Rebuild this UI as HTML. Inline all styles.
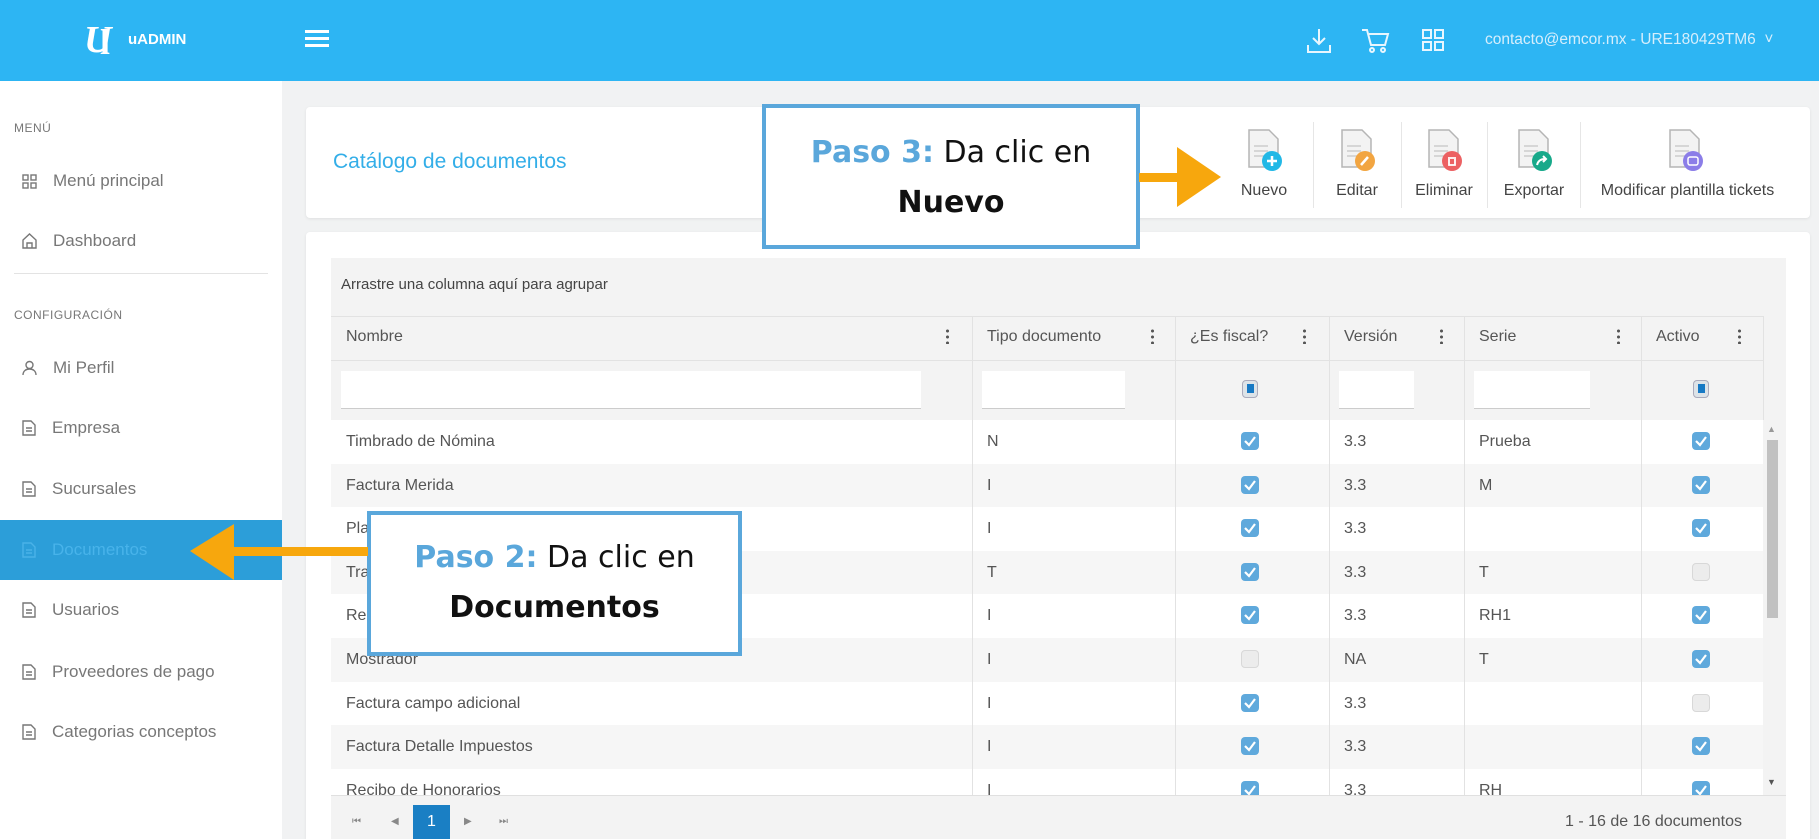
<!DOCTYPE html>
<html style="overflow:hidden;width:1819px;height:839px"><head><meta charset="utf-8">
<style>
*{margin:0;padding:0;box-sizing:border-box}
body{width:1819px;height:839px;overflow:hidden;background:#f1f2f3;font-family:"Liberation Sans",sans-serif;position:relative;color:#555}
.a{position:absolute}
.hdr{left:0;top:0;width:1819px;height:81px;background:#2db5f3}
.side{left:0;top:81px;width:282px;height:758px;background:#fff}
.si{position:absolute;left:22px;font-size:17px;color:#777;display:flex;align-items:center}
.si svg{margin-right:16px}
.sec{position:absolute;left:14px;font-size:12px;color:#777;letter-spacing:.5px}
.card{background:#fff;border-radius:4px;box-shadow:0 1px 3px rgba(0,0,0,.08)}
.tb{position:absolute;top:110px;height:100px;text-align:center;font-size:16px;color:#444}
.tb .lb{position:absolute;top:72px;left:0;right:0;white-space:nowrap}
.sep{position:absolute;top:122px;width:1px;height:86px;background:#e6e6e6}
.cell{position:absolute;font-size:16px;color:#555;white-space:nowrap}
.vl{position:absolute;width:1px;background:#e2e2e2}
.cb{position:absolute;width:18px;height:18px;border-radius:4px;background:#5fa9dc}
.cb svg{display:block}
.cbo{background:#ececec;border:1px solid #d8d8d8}
.dots{position:absolute;width:3px;height:16px;background:radial-gradient(circle,#555 1.4px,transparent 1.6px) 0 0/3px 6px repeat-y}
.ip{position:absolute;top:371px;height:38px;background:#fff;border-bottom:1px solid #ccc}
.callout{position:absolute;background:#fff;border:4px solid #5aa7db;text-align:center;font-family:"DejaVu Sans","Liberation Sans",sans-serif;color:#111;font-size:30px;line-height:50px}
.callout b{font-weight:bold}
.callout .p{color:#5aa7db;font-weight:bold}
</style></head><body>
<div class="a hdr"></div>
<div class="a" style="left:84px;top:20px;color:#fff;font-family:'Liberation Serif',serif;font-weight:bold;font-size:38px;line-height:40px;font-style:italic">U</div>
<div class="a" style="left:100px;top:22px;color:#fff;font-family:'Liberation Serif',serif;font-weight:bold;font-size:36px;line-height:40px">l</div>
<div class="a" style="left:128px;top:31px;color:#fff;font-weight:bold;font-size:15px">uADMIN</div>
<div class="a" style="left:305px;top:30px;width:24px;height:3px;background:#fff;box-shadow:0 7px 0 #fff,0 14px 0 #fff"></div>
<svg class="a" style="left:1306px;top:27px" width="26" height="28" viewBox="0 0 26 28" fill="none" stroke="#e8f6fe" stroke-width="2"><path d="M13 2v15M7 11l6 6 6-6M2 18v7h22v-7"/></svg>
<svg class="a" style="left:1360px;top:27px" width="30" height="28" viewBox="0 0 30 28" fill="none" stroke="#e8f6fe" stroke-width="2"><path d="M2 3h5l4 15h14l3-11H9"/><circle cx="12" cy="23" r="2"/><circle cx="23" cy="23" r="2"/></svg>
<svg class="a" style="left:1421px;top:28px" width="24" height="24" viewBox="0 0 24 24" fill="none" stroke="#e8f6fe" stroke-width="2"><rect x="2" y="2" width="8" height="8"/><rect x="14" y="2" width="8" height="8"/><rect x="2" y="14" width="8" height="8"/><rect x="14" y="14" width="8" height="8"/></svg>
<div class="a" style="left:1485px;top:31px;font-size:15.5px;color:#d6eefc;white-space:nowrap">contacto@emcor.mx - URE180429TM6 &nbsp;˅</div>

<div class="a side"></div>
<div class="sec" style="top:121px">MENÚ</div>
<div class="si" style="top:171px"><svg width="15" height="15" viewBox="0 0 15 15" fill="none" stroke="#777" stroke-width="1.4"><rect x="1" y="1" width="5" height="5"/><rect x="9" y="1" width="5" height="5"/><rect x="1" y="9" width="5" height="5"/><rect x="9" y="9" width="5" height="5"/></svg>Menú principal</div>
<div class="si" style="top:231px"><svg width="15" height="16" viewBox="0 0 15 16" fill="none" stroke="#777" stroke-width="1.4"><path d="M1 7l6.5-6 6.5 6v8H1z M5 15v-5h5v5"/></svg>Dashboard</div>
<div class="a" style="left:14px;top:273px;width:254px;height:1px;background:#e3e3e3"></div>
<div class="sec" style="top:308px">CONFIGURACIÓN</div>
<div class="si" style="top:358px"><svg width="15" height="16" viewBox="0 0 15 16" fill="none" stroke="#777" stroke-width="1.4"><circle cx="7.5" cy="5" r="3.5"/><path d="M1 15c0-4 3-6 6.5-6s6.5 2 6.5 6"/></svg>Mi Perfil</div>
<div class="si" style="top:418px"><svg width="14" height="16" viewBox="0 0 14 16" fill="none" stroke="#777" stroke-width="1.4"><path d="M1 1h8l4 4v10H1z M4 8h6M4 11h6"/></svg>Empresa</div>
<div class="si" style="top:479px"><svg width="14" height="16" viewBox="0 0 14 16" fill="none" stroke="#777" stroke-width="1.4"><path d="M1 1h8l4 4v10H1z M4 8h6M4 11h6"/></svg>Sucursales</div>
<div class="a" style="left:0;top:520px;width:282px;height:60px;background:#2c9ed9"></div>
<div class="si" style="top:540px;color:#48b3ea"><svg width="14" height="16" viewBox="0 0 14 16" fill="none" stroke="#4ab2e8" stroke-width="1.4"><path d="M1 1h8l4 4v10H1z M4 8h6M4 11h6"/></svg>Documentos</div>
<div class="si" style="top:600px"><svg width="14" height="16" viewBox="0 0 14 16" fill="none" stroke="#777" stroke-width="1.4"><path d="M1 1h8l4 4v10H1z M4 8h6M4 11h6"/></svg>Usuarios</div>
<div class="si" style="top:662px"><svg width="14" height="16" viewBox="0 0 14 16" fill="none" stroke="#777" stroke-width="1.4"><path d="M1 1h8l4 4v10H1z M4 8h6M4 11h6"/></svg>Proveedores de pago</div>
<div class="si" style="top:722px"><svg width="14" height="16" viewBox="0 0 14 16" fill="none" stroke="#777" stroke-width="1.4"><path d="M1 1h8l4 4v10H1z M4 8h6M4 11h6"/></svg>Categorias conceptos</div>

<div class="a card" style="left:306px;top:107px;width:1504px;height:111px"></div>
<div class="a" style="left:333px;top:150px;font-size:21px;color:#33aee8">Catálogo de documentos</div>
<div class="sep" style="left:1313px"></div>
<div class="sep" style="left:1401px"></div>
<div class="sep" style="left:1487px"></div>
<div class="sep" style="left:1580px"></div>
<div class="tb" style="left:1224px;width:80px"><svg style="position:absolute;left:22px;top:18px" width="40" height="44" viewBox="0 0 40 44"><path d="M3 2h20l9 9v28H3z" fill="#f3f3f3" stroke="#b5b5b5" stroke-width="1.5"/><path d="M8 18h14M8 23h14M8 28h10" stroke="#ccc" stroke-width="1.5"/><circle cx="26" cy="33" r="10" fill="#22b8e6"/><path d="M26 28v10M21 33h10" stroke="#fff" stroke-width="2.5"/></svg><div class="lb">Nuevo</div></div>
<div class="tb" style="left:1317px;width:80px"><svg style="position:absolute;left:22px;top:18px" width="40" height="44" viewBox="0 0 40 44"><path d="M3 2h20l9 9v28H3z" fill="#f3f3f3" stroke="#b5b5b5" stroke-width="1.5"/><path d="M8 18h14M8 23h14M8 28h10" stroke="#ccc" stroke-width="1.5"/><circle cx="26" cy="33" r="10" fill="#f2a541"/><path d="M22 37l7-8" stroke="#fff" stroke-width="2.5"/></svg><div class="lb">Editar</div></div>
<div class="tb" style="left:1404px;width:80px"><svg style="position:absolute;left:22px;top:18px" width="40" height="44" viewBox="0 0 40 44"><path d="M3 2h20l9 9v28H3z" fill="#f3f3f3" stroke="#b5b5b5" stroke-width="1.5"/><path d="M8 18h14M8 23h14M8 28h10" stroke="#ccc" stroke-width="1.5"/><circle cx="26" cy="33" r="10" fill="#ec6163"/><path d="M22 30h8M23 31v6h6v-6" stroke="#fff" stroke-width="1.8" fill="none"/></svg><div class="lb">Eliminar</div></div>
<div class="tb" style="left:1494px;width:80px"><svg style="position:absolute;left:22px;top:18px" width="40" height="44" viewBox="0 0 40 44"><path d="M3 2h20l9 9v28H3z" fill="#f3f3f3" stroke="#b5b5b5" stroke-width="1.5"/><path d="M8 18h14M8 23h14M8 28h10" stroke="#ccc" stroke-width="1.5"/><circle cx="26" cy="33" r="10" fill="#17a98a"/><path d="M21 37c1-4 4-6 8-6M27 28l3 3-3 3" stroke="#fff" stroke-width="2" fill="none"/></svg><div class="lb">Exportar</div></div>
<div class="tb" style="left:1590px;width:195px"><svg style="position:absolute;left:77px;top:18px" width="40" height="44" viewBox="0 0 40 44"><path d="M3 2h20l9 9v28H3z" fill="#f3f3f3" stroke="#b5b5b5" stroke-width="1.5"/><path d="M8 18h14M8 23h14M8 28h10" stroke="#ccc" stroke-width="1.5"/><circle cx="26" cy="33" r="10" fill="#8b7de8"/><rect x="21" y="29" width="10" height="8" rx="2" stroke="#fff" stroke-width="1.5" fill="none"/></svg><div class="lb">Modificar plantilla tickets</div></div>

<div class="a card" style="left:306px;top:232px;width:1504px;height:607px;border-radius:4px 4px 0 0"></div>
<div class="a" style="left:331px;top:258px;width:1455px;height:581px;background:#f3f3f3"></div>
<div class="a" style="left:341px;top:276px;font-size:15px;color:#444">Arrastre una columna aquí para agrupar</div>
<div class="a" style="left:331px;top:316px;width:1432px;height:1px;background:#e2e2e2"></div>
<div class="a" style="left:331px;top:360px;width:1432px;height:1px;background:#e2e2e2"></div>
<div class="a" style="left:331px;top:420px;width:1432px;height:375px;overflow:hidden">
 <div style="height:43.6px;background:#fff"></div><div style="height:43.6px;background:#f6f6f6"></div>
 <div style="height:43.6px;background:#fff"></div><div style="height:43.6px;background:#f6f6f6"></div>
 <div style="height:43.6px;background:#fff"></div><div style="height:43.6px;background:#f6f6f6"></div>
 <div style="height:43.6px;background:#fff"></div><div style="height:43.6px;background:#f6f6f6"></div>
 <div style="height:43.6px;background:#fff"></div>
</div>
<div class="vl" style="left:972px;top:316px;height:479px"></div>
<div class="vl" style="left:1175px;top:316px;height:479px"></div>
<div class="vl" style="left:1329px;top:316px;height:479px"></div>
<div class="vl" style="left:1464px;top:316px;height:479px"></div>
<div class="vl" style="left:1641px;top:316px;height:479px"></div>
<div class="vl" style="left:1763px;top:316px;height:104px"></div>
<div class="cell" style="left:346px;top:328px">Nombre</div><div class="dots" style="left:946px;top:328px"></div>
<div class="cell" style="left:987px;top:328px">Tipo documento</div><div class="dots" style="left:1151px;top:328px"></div>
<div class="cell" style="left:1190px;top:328px">¿Es fiscal?</div><div class="dots" style="left:1303px;top:328px"></div>
<div class="cell" style="left:1344px;top:328px">Versión</div><div class="dots" style="left:1440px;top:328px"></div>
<div class="cell" style="left:1479px;top:328px">Serie</div><div class="dots" style="left:1617px;top:328px"></div>
<div class="cell" style="left:1656px;top:328px">Activo</div><div class="dots" style="left:1738px;top:328px"></div>
<div class="ip" style="left:341px;width:580px"></div>
<div class="ip" style="left:982px;width:143px"></div>
<div class="ip" style="left:1339px;width:75px"></div>
<div class="ip" style="left:1474px;width:116px"></div>
<div class="a" style="left:1242px;top:380px;width:16px;height:18px;border-radius:4px;background:#dde3e8;border:1px solid #aab"><div style="margin:3px auto;width:7px;height:9px;background:#1779c4"></div></div>
<div class="a" style="left:1693px;top:380px;width:16px;height:18px;border-radius:4px;background:#dde3e8;border:1px solid #aab"><div style="margin:3px auto;width:7px;height:9px;background:#1779c4"></div></div>

<div class="a" style="left:331px;top:420px;width:1432px;height:375px;overflow:hidden">
<div style="position:relative">
<div class="cell" style="left:15px;top:13px">Timbrado de Nómina</div><div class="cell" style="left:656px;top:13px">N</div><div class="cell" style="left:1013px;top:13px">3.3</div><div class="cell" style="left:1148px;top:13px">Prueba</div>
<div class="cell" style="left:15px;top:57px">Factura Merida</div><div class="cell" style="left:656px;top:57px">I</div><div class="cell" style="left:1013px;top:57px">3.3</div><div class="cell" style="left:1148px;top:57px">M</div>
<div class="cell" style="left:15px;top:100px">Plantilla</div><div class="cell" style="left:656px;top:100px">I</div><div class="cell" style="left:1013px;top:100px">3.3</div>
<div class="cell" style="left:15px;top:144px">Traslado</div><div class="cell" style="left:656px;top:144px">T</div><div class="cell" style="left:1013px;top:144px">3.3</div><div class="cell" style="left:1148px;top:144px">T</div>
<div class="cell" style="left:15px;top:187px">Recibo</div><div class="cell" style="left:656px;top:187px">I</div><div class="cell" style="left:1013px;top:187px">3.3</div><div class="cell" style="left:1148px;top:187px">RH1</div>
<div class="cell" style="left:15px;top:231px">Mostrador</div><div class="cell" style="left:656px;top:231px">I</div><div class="cell" style="left:1013px;top:231px">NA</div><div class="cell" style="left:1148px;top:231px">T</div>
<div class="cell" style="left:15px;top:275px">Factura campo adicional</div><div class="cell" style="left:656px;top:275px">I</div><div class="cell" style="left:1013px;top:275px">3.3</div>
<div class="cell" style="left:15px;top:318px">Factura Detalle Impuestos</div><div class="cell" style="left:656px;top:318px">I</div><div class="cell" style="left:1013px;top:318px">3.3</div>
<div class="cell" style="left:15px;top:362px">Recibo de Honorarios</div><div class="cell" style="left:656px;top:362px">I</div><div class="cell" style="left:1013px;top:362px">3.3</div><div class="cell" style="left:1148px;top:362px">RH</div>
<div class="cb" style="left:910px;top:12px"><svg width="18" height="18"><path d="M4 9l4 4 6-8" stroke="#fff" stroke-width="2.2" fill="none"/></svg></div>
<div class="cb" style="left:910px;top:56px"><svg width="18" height="18"><path d="M4 9l4 4 6-8" stroke="#fff" stroke-width="2.2" fill="none"/></svg></div>
<div class="cb" style="left:910px;top:99px"><svg width="18" height="18"><path d="M4 9l4 4 6-8" stroke="#fff" stroke-width="2.2" fill="none"/></svg></div>
<div class="cb" style="left:910px;top:143px"><svg width="18" height="18"><path d="M4 9l4 4 6-8" stroke="#fff" stroke-width="2.2" fill="none"/></svg></div>
<div class="cb" style="left:910px;top:186px"><svg width="18" height="18"><path d="M4 9l4 4 6-8" stroke="#fff" stroke-width="2.2" fill="none"/></svg></div>
<div class="cb cbo" style="left:910px;top:230px"></div>
<div class="cb" style="left:910px;top:274px"><svg width="18" height="18"><path d="M4 9l4 4 6-8" stroke="#fff" stroke-width="2.2" fill="none"/></svg></div>
<div class="cb" style="left:910px;top:317px"><svg width="18" height="18"><path d="M4 9l4 4 6-8" stroke="#fff" stroke-width="2.2" fill="none"/></svg></div>
<div class="cb" style="left:910px;top:361px"><svg width="18" height="18"><path d="M4 9l4 4 6-8" stroke="#fff" stroke-width="2.2" fill="none"/></svg></div>
<div class="cb" style="left:1361px;top:12px"><svg width="18" height="18"><path d="M4 9l4 4 6-8" stroke="#fff" stroke-width="2.2" fill="none"/></svg></div>
<div class="cb" style="left:1361px;top:56px"><svg width="18" height="18"><path d="M4 9l4 4 6-8" stroke="#fff" stroke-width="2.2" fill="none"/></svg></div>
<div class="cb" style="left:1361px;top:99px"><svg width="18" height="18"><path d="M4 9l4 4 6-8" stroke="#fff" stroke-width="2.2" fill="none"/></svg></div>
<div class="cb cbo" style="left:1361px;top:143px"></div>
<div class="cb" style="left:1361px;top:186px"><svg width="18" height="18"><path d="M4 9l4 4 6-8" stroke="#fff" stroke-width="2.2" fill="none"/></svg></div>
<div class="cb" style="left:1361px;top:230px"><svg width="18" height="18"><path d="M4 9l4 4 6-8" stroke="#fff" stroke-width="2.2" fill="none"/></svg></div>
<div class="cb cbo" style="left:1361px;top:274px"></div>
<div class="cb" style="left:1361px;top:317px"><svg width="18" height="18"><path d="M4 9l4 4 6-8" stroke="#fff" stroke-width="2.2" fill="none"/></svg></div>
<div class="cb" style="left:1361px;top:361px"><svg width="18" height="18"><path d="M4 9l4 4 6-8" stroke="#fff" stroke-width="2.2" fill="none"/></svg></div>
</div></div>
<div class="a" style="left:1763px;top:420px;width:23px;height:375px;background:#f3f3f3"></div>
<div class="a" style="left:1767px;top:440px;width:11px;height:178px;background:#c1c1c1"></div>
<div class="a" style="left:1767px;top:424px;font-size:9px;color:#999">▲</div>
<div class="a" style="left:1767px;top:777px;font-size:9px;color:#555">▼</div>
<div class="a" style="left:331px;top:795px;width:1455px;height:44px;background:#f3f3f3;border-top:1px solid #e0e0e0"></div>
<div class="a" style="left:352px;top:816px;font-size:10px;color:#888">⏮</div>
<div class="a" style="left:391px;top:816px;font-size:10px;color:#888">◀</div>
<div class="a" style="left:413px;top:805px;width:37px;height:34px;background:#1a7fc4;color:#fff;font-size:16px;text-align:center;line-height:34px">1</div>
<div class="a" style="left:464px;top:816px;font-size:10px;color:#888">▶</div>
<div class="a" style="left:499px;top:816px;font-size:10px;color:#888">⏭</div>
<div class="a" style="left:1565px;top:813px;font-size:16px;color:#555">1 - 16 de 16 documentos</div>

<div class="callout" style="left:367px;top:511px;width:375px;height:145px;padding-top:18px">
<span class="p">Paso 2:</span> Da clic en<br><b>Documentos</b></div>
<svg class="a" style="left:188px;top:520px" width="180" height="64" viewBox="0 0 180 64"><rect x="45" y="27" width="135" height="9" fill="#f7a70d"/><path d="M2 31L46 4v56z" fill="#f7a70d"/></svg>

<div class="callout" style="left:762px;top:104px;width:378px;height:145px;padding-top:20px">
<span class="p">Paso 3:</span> Da clic en<br><b>Nuevo</b></div>
<svg class="a" style="left:1139px;top:145px" width="84" height="64" viewBox="0 0 84 64"><rect x="0" y="28" width="40" height="9" fill="#f7a70d"/><path d="M82 32L38 2v60z" fill="#f7a70d"/></svg>
</body></html>
